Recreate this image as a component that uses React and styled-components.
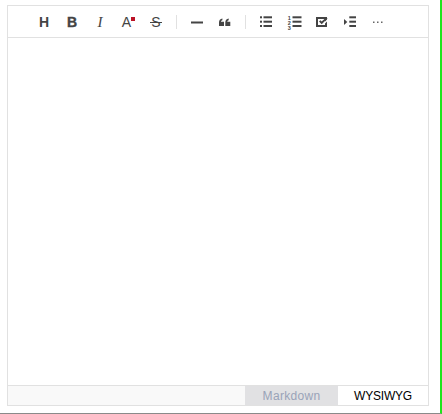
import React from 'react';
import styled, { createGlobalStyle } from 'styled-components';

const Global = createGlobalStyle`
  html, body { margin: 0; padding: 0; background: #fff; }
  body { font-family: "Liberation Sans", Arial, sans-serif; }
`;

const Page = styled.div`
  box-sizing: border-box;
  width: 442px;
  height: 414px;
  padding: 5px 11px 7px 7px;
  background: #fff;
  border-right: 2px solid #1ee61a;
  border-bottom: 1px solid #8a8a8a;
  display: flex;
`;

const Editor = styled.div`
  flex: 1;
  display: flex;
  flex-direction: column;
  border: 1px solid #e1e1e1;
`;

const Toolbar = styled.div`
  box-sizing: border-box;
  height: 32px;
  flex: none;
  display: flex;
  align-items: center;
  padding: 1px 0 0 22px;
  border-bottom: 1px solid #e1e1e1;
`;

const ToolButton = styled.div`
  flex: none;
  width: 24px;
  height: 24px;
  margin: 0 2px;
  display: flex;
  align-items: center;
  justify-content: center;
  position: relative;
  color: #444;
`;

const Glyph = styled.span`
  font-family: ${p => (p.$serif ? '"Liberation Serif", serif' : '"Liberation Sans", sans-serif')};
  font-size: ${p => p.$size || 14}px;
  font-weight: ${p => p.$weight || 400};
  font-style: ${p => (p.$italic ? 'italic' : 'normal')};
  -webkit-text-stroke: ${p => p.$stroke || 0}px #444;
  margin-right: ${p => p.$shift || 0}px;
  line-height: 1;
  color: #444;
`;

const RedDot = styled.i`
  position: absolute;
  left: 15px;
  top: 7px;
  width: 4px;
  height: 4px;
  background: #bb1226;
`;

const StrikeLine = styled.i`
  position: absolute;
  left: 6px;
  top: 12px;
  width: 12px;
  height: 1px;
  background: #444;
`;

const Divider = styled.div`
  flex: none;
  width: 1px;
  height: 14px;
  margin: 0 6px;
  background: #e1e1e1;
`;

const Body = styled.div`
  flex: 1;
  background: #fff;
`;

const ModeBar = styled.div`
  box-sizing: border-box;
  height: 20px;
  flex: none;
  display: flex;
  justify-content: flex-end;
  background: #f9f9f9;
  border-top: 1px solid #e1e1e1;
`;

const ModeTab = styled.div`
  box-sizing: border-box;
  width: ${p => p.$width}px;
  display: flex;
  align-items: center;
  justify-content: center;
  font-size: 12px;
  letter-spacing: ${p => p.$spacing}px;
  background: ${p => (p.$active ? '#fff' : '#e1e1e3')};
  color: ${p => (p.$active ? '#000' : '#99a3b8')};
`;

const Icon = ({ children }) => (
  <svg width="16" height="16" viewBox="0 0 16 16" fill="#444">{children}</svg>
);

const Rows = ({ x, w }) => (
  <>
    <rect x={x} y="2.300" width={w} height="2" />
    <rect x={x} y="6.700" width={w} height="2" />
    <rect x={x} y="11" width={w} height="2" />
  </>
);

export default function App() {
  return (
    <Page>
      <Global />
      <Editor>
        <Toolbar>
          <ToolButton><Glyph $weight={700}>H</Glyph></ToolButton>
          <ToolButton><Glyph $weight={700} $stroke={0.4}>B</Glyph></ToolButton>
          <ToolButton><Glyph $size={15} $serif $italic>I</Glyph></ToolButton>
          <ToolButton><Glyph $shift={3}>A</Glyph><RedDot /></ToolButton>
          <ToolButton><Glyph>S</Glyph><StrikeLine /></ToolButton>
          <Divider />
          <ToolButton>
            <Icon><rect x="2" y="7.500" width="12" height="2" /></Icon>
          </ToolButton>
          <ToolButton>
            <Icon>
              <path d="M2 12V8.500C2 6.300 3.200 5 5.400 4.500v1.700C4.500 6.500 4 7 4 7.800H7V12ZM8.300 12V8.500c0-2.200 1.200-3.500 3.400-4v1.700c-.9.300-1.400.8-1.400 1.600h3V12Z" />
            </Icon>
          </ToolButton>
          <Divider />
          <ToolButton>
            <Icon>
              <rect x="2" y="2.300" width="2" height="2" /><rect x="2" y="6.700" width="2" height="2" /><rect x="2" y="11" width="2" height="2" />
              <Rows x={5.500} w={8.500} />
            </Icon>
          </ToolButton>
          <ToolButton>
            <Icon>
              <text x="1.700" y="5.500" fontSize="5.500" fontWeight="700" fontFamily="Liberation Sans">1</text>
              <text x="1.700" y="10.500" fontSize="5.500" fontWeight="700" fontFamily="Liberation Sans">2</text>
              <text x="1.700" y="15.500" fontSize="5.500" fontWeight="700" fontFamily="Liberation Sans">3</text>
              <Rows x={6.500} w={9} />
            </Icon>
          </ToolButton>
          <ToolButton>
            <Icon>
              <path fillRule="evenodd" d="M2 3h11v2.500l-2 2V5H4v6h7V9.500l2-2V13H2Z" />
              <path d="M5 7.500 6.400 6.200 7.700 7.600 12.300 3.200 13.500 4.500 7.700 10.300Z" />
            </Icon>
          </ToolButton>
          <ToolButton>
            <Icon>
              <path d="M2 5l3.300 3L2 11Z" />
              <Rows x={7.300} w={6.700} />
            </Icon>
          </ToolButton>
          <ToolButton>
            <Icon>
              <rect x="3" y="7.500" width="1.500" height="1.500" fill="#666" /><rect x="7" y="7.500" width="1.500" height="1.500" fill="#666" /><rect x="11" y="7.500" width="1.500" height="1.500" fill="#666" />
            </Icon>
          </ToolButton>
        </Toolbar>
        <Body />
        <ModeBar>
          <ModeTab $width={93} $spacing={0.3}>Markdown</ModeTab>
          <ModeTab $width={90} $spacing={-0.2} $active>WYSIWYG</ModeTab>
        </ModeBar>
      </Editor>
    </Page>
  );
}
